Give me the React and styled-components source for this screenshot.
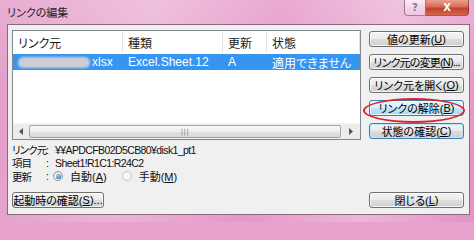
import React from 'react';
import styled, { createGlobalStyle, css } from 'styled-components';

const GlobalStyle = createGlobalStyle`
  html, body {
    margin: 0;
    padding: 0;
    background: #e7a3cc;
  }
  body {
    font-family: "Liberation Sans", "Noto Sans CJK JP", sans-serif;
    font-feature-settings: "palt";
  }
`;

// pink Aero frame around the dialog
const Window = styled.div`
  position: relative;
  width: 474px;
  height: 222px;
  box-sizing: border-box;
  padding: 0 4px 7px 7px;
  display: flex;
  flex-direction: column;
  overflow: hidden;
  background:
    linear-gradient(180deg, rgba(255, 255, 255, 0.18) 0%, rgba(255, 255, 255, 0) 40%),
    linear-gradient(100deg, #e39cc8 0%, #ebb4d6 30%, #e597c8 55%, #ecb6d8 78%, #e392c6 100%);
`;

const TitleBar = styled.div`
  height: 24px;
  display: flex;
  align-items: flex-start;
  justify-content: space-between;
`;

const Title = styled.span`
  padding-top: 6px;
  font-size: 11px;
  line-height: 14px;
  color: #1f1f1f;
`;

const Caption = styled.div`
  display: flex;
  margin-right: 1px;
`;

const CaptionButton = styled.div`
  height: 16px;
  box-sizing: border-box;
  display: flex;
  align-items: center;
  justify-content: center;
  font-family: "DejaVu Sans", sans-serif;
  font-weight: bold;
  font-size: 10px;
  border: 1px solid rgba(90, 40, 70, 0.55);
  border-top: none;
  ${({ $close }) =>
    $close
      ? css`
          width: 43px;
          border-left: none;
          border-radius: 0 0 4px 0;
          color: #fff;
          background: linear-gradient(180deg, #e9a08f 0%, #d66c58 45%, #c4412d 55%, #d5654c 100%);
        `
      : css`
          width: 22px;
          border-radius: 0 0 0 4px;
          color: #7a7d9c;
          background: linear-gradient(180deg, rgba(255, 255, 255, 0.7) 0%, rgba(255, 255, 255, 0.35) 50%, rgba(255, 255, 255, 0.15) 100%);
        `}
`;

const Client = styled.div`
  flex: 1;
  border: 1px solid #8a6a80;
  background: #f0f0f0;
  padding: 5px 5px 6px 4px;
  display: grid;
  grid-template-columns: 1fr 95px;
  column-gap: 8px;
`;

const LeftPane = styled.div`
  display: flex;
  flex-direction: column;
  min-width: 0;
`;

const RightPane = styled.div`
  margin-top: 1px;
  display: flex;
  flex-direction: column;
  gap: 7px;
`;

const ListView = styled.div`
  height: 110px;
  box-sizing: border-box;
  border: 1px solid #828790;
  background: #fff;
  display: flex;
  flex-direction: column;
`;

const Cols = styled.div`
  display: grid;
  grid-template-columns: 110px 100px 44px 1fr;
  font-size: 12px;
`;

const Header = styled(Cols)`
  height: 22px;
  align-items: stretch;
  color: #1a1a1a;
`;

const HeadCell = styled.div`
  padding-left: 5px;
  display: flex;
  align-items: center;
  border-right: 1px solid #e3e3e3;
  white-space: nowrap;
`;

const Row = styled(Cols)`
  margin-top: 1px;
  height: 16px;
  align-items: center;
  color: #fff;
  background: ${({ $selected }) => ($selected ? '#3795f2' : 'transparent')};
`;

const Cell = styled.div`
  padding-left: 5px;
  display: flex;
  align-items: center;
  white-space: nowrap;
  overflow: hidden;
`;

const Redacted = styled.span`
  width: 72px;
  height: 11px;
  border-radius: 6px;
  background: #cdcdd3;
  filter: blur(1.3px);
  margin-right: 2px;
`;

const ListSpacer = styled.div`
  flex: 1;
`;

const HScroll = styled.div`
  height: 15px;
  display: flex;
  align-items: stretch;
  background: #ececec;
  border-top: 1px solid #f6f6f6;
`;

const ScrollArrow = styled.div`
  width: ${({ $w }) => $w}px;
  display: flex;
  align-items: center;
  justify-content: center;
`;

const Thumb = styled.div`
  flex: 1;
  margin: 1px 0;
  border: 1px solid #a4a4a4;
  border-radius: 2px;
  background: linear-gradient(180deg, #f8f8f8 0%, #efefef 50%, #e2e2e2 51%, #d8d8d8 100%);
  display: flex;
  align-items: center;
  justify-content: center;
`;

const Grip = styled.span`
  font-size: 7px;
  letter-spacing: 0.5px;
  color: #777;
  font-family: "DejaVu Sans", sans-serif;
`;

const Info = styled.div`
  margin-top: 2px;
  display: flex;
  flex-direction: column;
`;

const InfoRow = styled.div`
  height: 13px;
  display: grid;
  grid-template-columns: 34px 7px 1fr;
  align-items: center;
  font-size: 11px;
  color: #111;
`;

const Label = styled.span`
  font-size: 10.5px;
  letter-spacing: -0.9px;
  white-space: nowrap;
`;

const Value = styled.span`
  padding-left: 2px;
  font-size: 10.5px;
  letter-spacing: -0.6px;
  white-space: nowrap;
`;

const RadioGroup = styled.div`
  display: flex;
  align-items: center;
  font-size: 11px;
`;

const Radio = styled.span`
  width: 10px;
  height: 10px;
  box-sizing: border-box;
  border-radius: 50%;
  border: 1px solid ${({ $checked }) => ($checked ? '#8e8f8f' : '#c4c4c4')};
  background: ${({ $checked }) => ($checked ? 'linear-gradient(180deg, #e8e8e8, #fafafa)' : '#f6f6f6')};
  display: inline-flex;
  align-items: center;
  justify-content: center;
  margin-right: 7px;
  &::after {
    content: '';
    width: 5px;
    height: 5px;
    border-radius: 50%;
    background: ${({ $checked }) =>
      $checked ? 'radial-gradient(circle at 40% 35%, #a8dcfa 0%, #2d7ac4 70%, #1a5a9e 100%)' : 'transparent'};
  }
`;

const RadioLabel = styled.span`
  margin-right: 15px;
  white-space: nowrap;
`;

const Button = styled.div`
  position: relative;
  height: 16px;
  box-sizing: border-box;
  border: 1px solid #707070;
  border-radius: 3px;
  display: flex;
  align-items: center;
  justify-content: center;
  font-size: 11px;
  color: #000;
  white-space: nowrap;
  letter-spacing: ${({ $tight }) => ($tight ? '-0.8px' : '0')};
  background: linear-gradient(180deg, #f3f3f3 0%, #ebebeb 50%, #dddddd 51%, #cfcfcf 100%);
  box-shadow: inset 0 0 0 1px rgba(255, 255, 255, 0.75);
  ${({ $state }) =>
    $state === 'hover' &&
    css`
      border-color: #3c7fb1;
      background: linear-gradient(180deg, #eaf6fd 0%, #d9f0fc 50%, #bee6fd 51%, #a7d9f5 100%);
    `}
  ${({ $state }) =>
    $state === 'focus' &&
    css`
      border-color: #3c7fb1;
      box-shadow: inset 0 0 0 1px #bfe6fb;
    `}
  ${({ $width }) => $width && css`width: ${$width}px;`}
`;

const BottomButton = styled(Button)`
  margin-top: auto;
`;

const CloseButton = styled(Button)`
  margin-top: auto;
`;

// red hand-drawn marker around the highlighted button
const Marker = styled.span`
  position: absolute;
  left: -7px;
  right: -2px;
  top: -3px;
  bottom: -8px;
  border: 2px solid #d8252d;
  border-radius: 50%;
  pointer-events: none;
`;

const Key = styled.u`
  text-underline-offset: 1px;
`;

const Arrow = ({ dir }) => (
  <svg width="4" height="7" viewBox="0 0 4 7">
    {dir === 'left' ? <path d="M4 0 L0 3.5 L4 7 Z" fill="#555" /> : <path d="M0 0 L4 3.5 L0 7 Z" fill="#555" />}
  </svg>
);

const App = () => {
  return (
    <>
      <GlobalStyle />
      <Window>
        <TitleBar>
          <Title>リンクの編集</Title>
          <Caption>
            <CaptionButton>?</CaptionButton>
            <CaptionButton $close>X</CaptionButton>
          </Caption>
        </TitleBar>
        <Client>
          <LeftPane>
            <ListView>
              <Header>
                <HeadCell>リンク元</HeadCell>
                <HeadCell>種類</HeadCell>
                <HeadCell>更新</HeadCell>
                <HeadCell>状態</HeadCell>
              </Header>
              <Row $selected>
                <Cell>
                  <Redacted />
                  xlsx
                </Cell>
                <Cell>Excel.Sheet.12</Cell>
                <Cell>A</Cell>
                <Cell>適用できません</Cell>
              </Row>
              <ListSpacer />
              <HScroll>
                <ScrollArrow $w={16}>
                  <Arrow dir="left" />
                </ScrollArrow>
                <Thumb>
                  <Grip>|||</Grip>
                </Thumb>
                <ScrollArrow $w={19}>
                  <Arrow dir="right" />
                </ScrollArrow>
              </HScroll>
            </ListView>

            <Info>
              <InfoRow>
                <Label>リンク元</Label>
                <Label>:</Label>
                <Value>¥¥APDCFB02D5CB80¥disk1_pt1</Value>
              </InfoRow>
              <InfoRow>
                <Label>項目</Label>
                <Label>:</Label>
                <Value>Sheet1!R1C1:R24C2</Value>
              </InfoRow>
              <InfoRow>
                <Label>更新</Label>
                <Label>:</Label>
                <RadioGroup>
                  <Radio $checked />
                  <RadioLabel>
                    自動(<Key>A</Key>)
                  </RadioLabel>
                  <Radio />
                  <RadioLabel>
                    手動(<Key>M</Key>)
                  </RadioLabel>
                </RadioGroup>
              </InfoRow>
            </Info>

            <BottomButton $width={92}>
              起動時の確認(<Key>S</Key>)...
            </BottomButton>
          </LeftPane>

          <RightPane>
            <Button>
              値の更新(<Key>U</Key>)
            </Button>
            <Button $tight>
              リンク元の変更(<Key>N</Key>)...
            </Button>
            <Button>
              リンク元を開く(<Key>O</Key>)
            </Button>
            <Button $state="hover">
              リンクの解除(<Key>B</Key>)
              <Marker />
            </Button>
            <Button $state="focus">
              状態の確認(<Key>C</Key>)
            </Button>
            <CloseButton>
              閉じる(<Key>L</Key>)
            </CloseButton>
          </RightPane>
        </Client>
      </Window>
    </>
  );
};

export default App;
